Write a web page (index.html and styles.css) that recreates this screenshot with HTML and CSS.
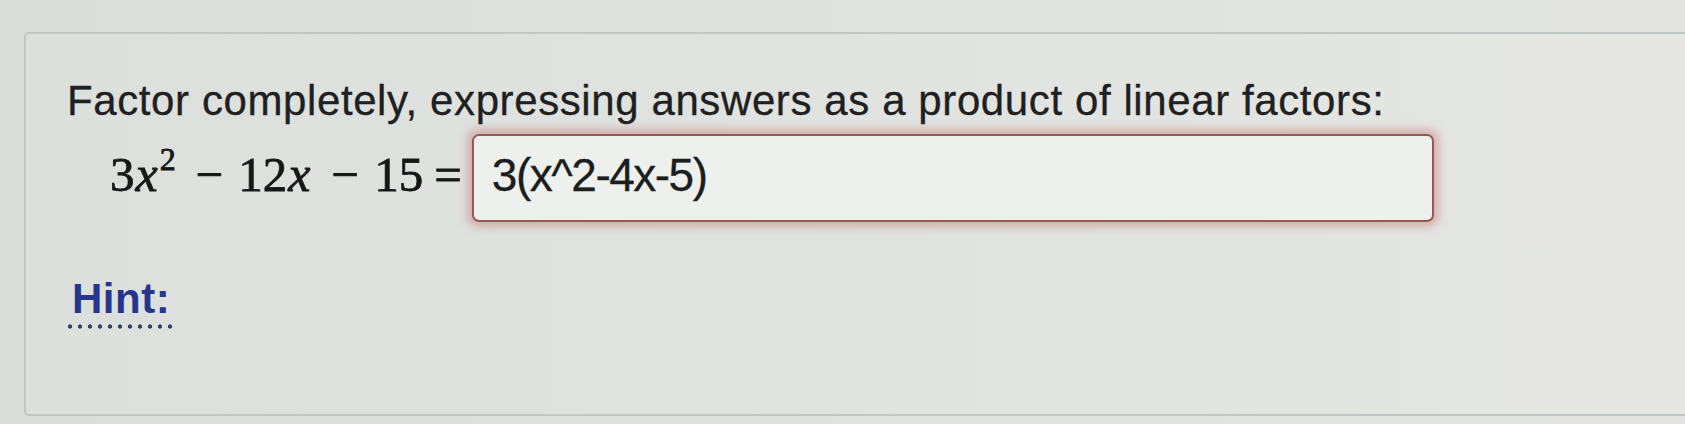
FILE: index.html
```html
<!DOCTYPE html>
<html lang="en">
<head>
<meta charset="utf-8">
<title>Factor completely</title>
<link rel="stylesheet" href="styles.css">
</head>
<body>
<div class="screen">
  <div class="panel">
    <p class="prompt">Factor completely, expressing answers as a product of linear factors:</p>
    <div class="eq-row">
      <span class="math"><span class="num">3</span><i class="var">x</i><sup class="sup">2</sup><span class="op">−</span><span class="num">12</span><i class="var">x</i><span class="op">−</span><span class="num">15</span><span class="rel">=</span></span>
      <div class="answer">3(x^2-4x-5)</div>
    </div>
    <div class="hint-row"><span class="hint">Hint:</span></div>
  </div>
</div>
</body>
</html>
```

FILE: styles.css
```css
html, body {
  margin: 0;
  padding: 0;
  overflow: hidden;
}

body {
  width: 1685px;
  height: 424px;
  font-family: "Liberation Sans", Arial, Helvetica, sans-serif;
  color: #1f2122;
}

.screen {
  width: 1685px;
  height: 424px;
  box-sizing: border-box;
  padding: 32px 0 0 24px;
  background: linear-gradient(90deg, #d9dedb 0%, #dee2df 45%, #e4e5e1 100%);
  overflow: hidden;
}

.panel {
  box-sizing: border-box;
  width: 1700px;
  height: 384px;
  border: 2px solid #c1c5c3;
  border-radius: 5px;
  background: linear-gradient(90deg, #dce0dd 0%, #e0e3e0 50%, #e6e7e3 100%);
  padding: 43px 0 0 41px;
}

.prompt {
  margin: 0;
  font-size: 42px;
  line-height: 48px;
  letter-spacing: 0.6px;
  color: #1e2021;
  -webkit-text-stroke: 0.3px #1e2021;
}

.eq-row {
  display: flex;
  align-items: baseline;
  margin-top: 9px;
}

.math {
  margin-left: 43px;
  font-family: "Liberation Serif", "Times New Roman", serif;
  font-size: 49px;
  color: #161818;
  -webkit-text-stroke: 0.8px #161818;
  white-space: nowrap;
}

.var {
  font-style: italic;
  font-size: 50px;
  margin-left: 1px;
  margin-right: 1px;
}

.sup {
  font-size: 32px;
  vertical-align: 0;
  position: relative;
  top: -21px;
  margin-left: 1px;
}

.op {
  margin: 0 15px 0 20px;
}

.rel {
  margin-left: 11px;
}

.answer {
  box-sizing: border-box;
  width: 962px;
  height: 88px;
  margin-left: 10px;
  border: 2px solid #935955;
  border-radius: 7px;
  background: #eef0ee;
  box-shadow: 0 0 9px 5px rgba(200, 125, 125, 0.5);
  padding: 16px 0 0 18px;
  font-family: "Liberation Sans", Arial, Helvetica, sans-serif;
  font-size: 46px;
  line-height: 46px;
  letter-spacing: -1.5px;
  color: #1c1e1e;
  -webkit-text-stroke: 0.3px #1c1e1e;
}

.hint-row {
  margin-top: 55px;
  margin-left: -2px;
}

.hint {
  display: inline-block;
  padding: 0 7px 8px 7px;
  font-size: 42px;
  line-height: 44px;
  letter-spacing: 0.5px;
  font-weight: bold;
  color: #27358e;
  background-image: radial-gradient(circle, #384270 1.9px, transparent 2.4px);
  background-size: 10px 5px;
  background-repeat: repeat-x;
  background-position: 0 100%;
}
```
